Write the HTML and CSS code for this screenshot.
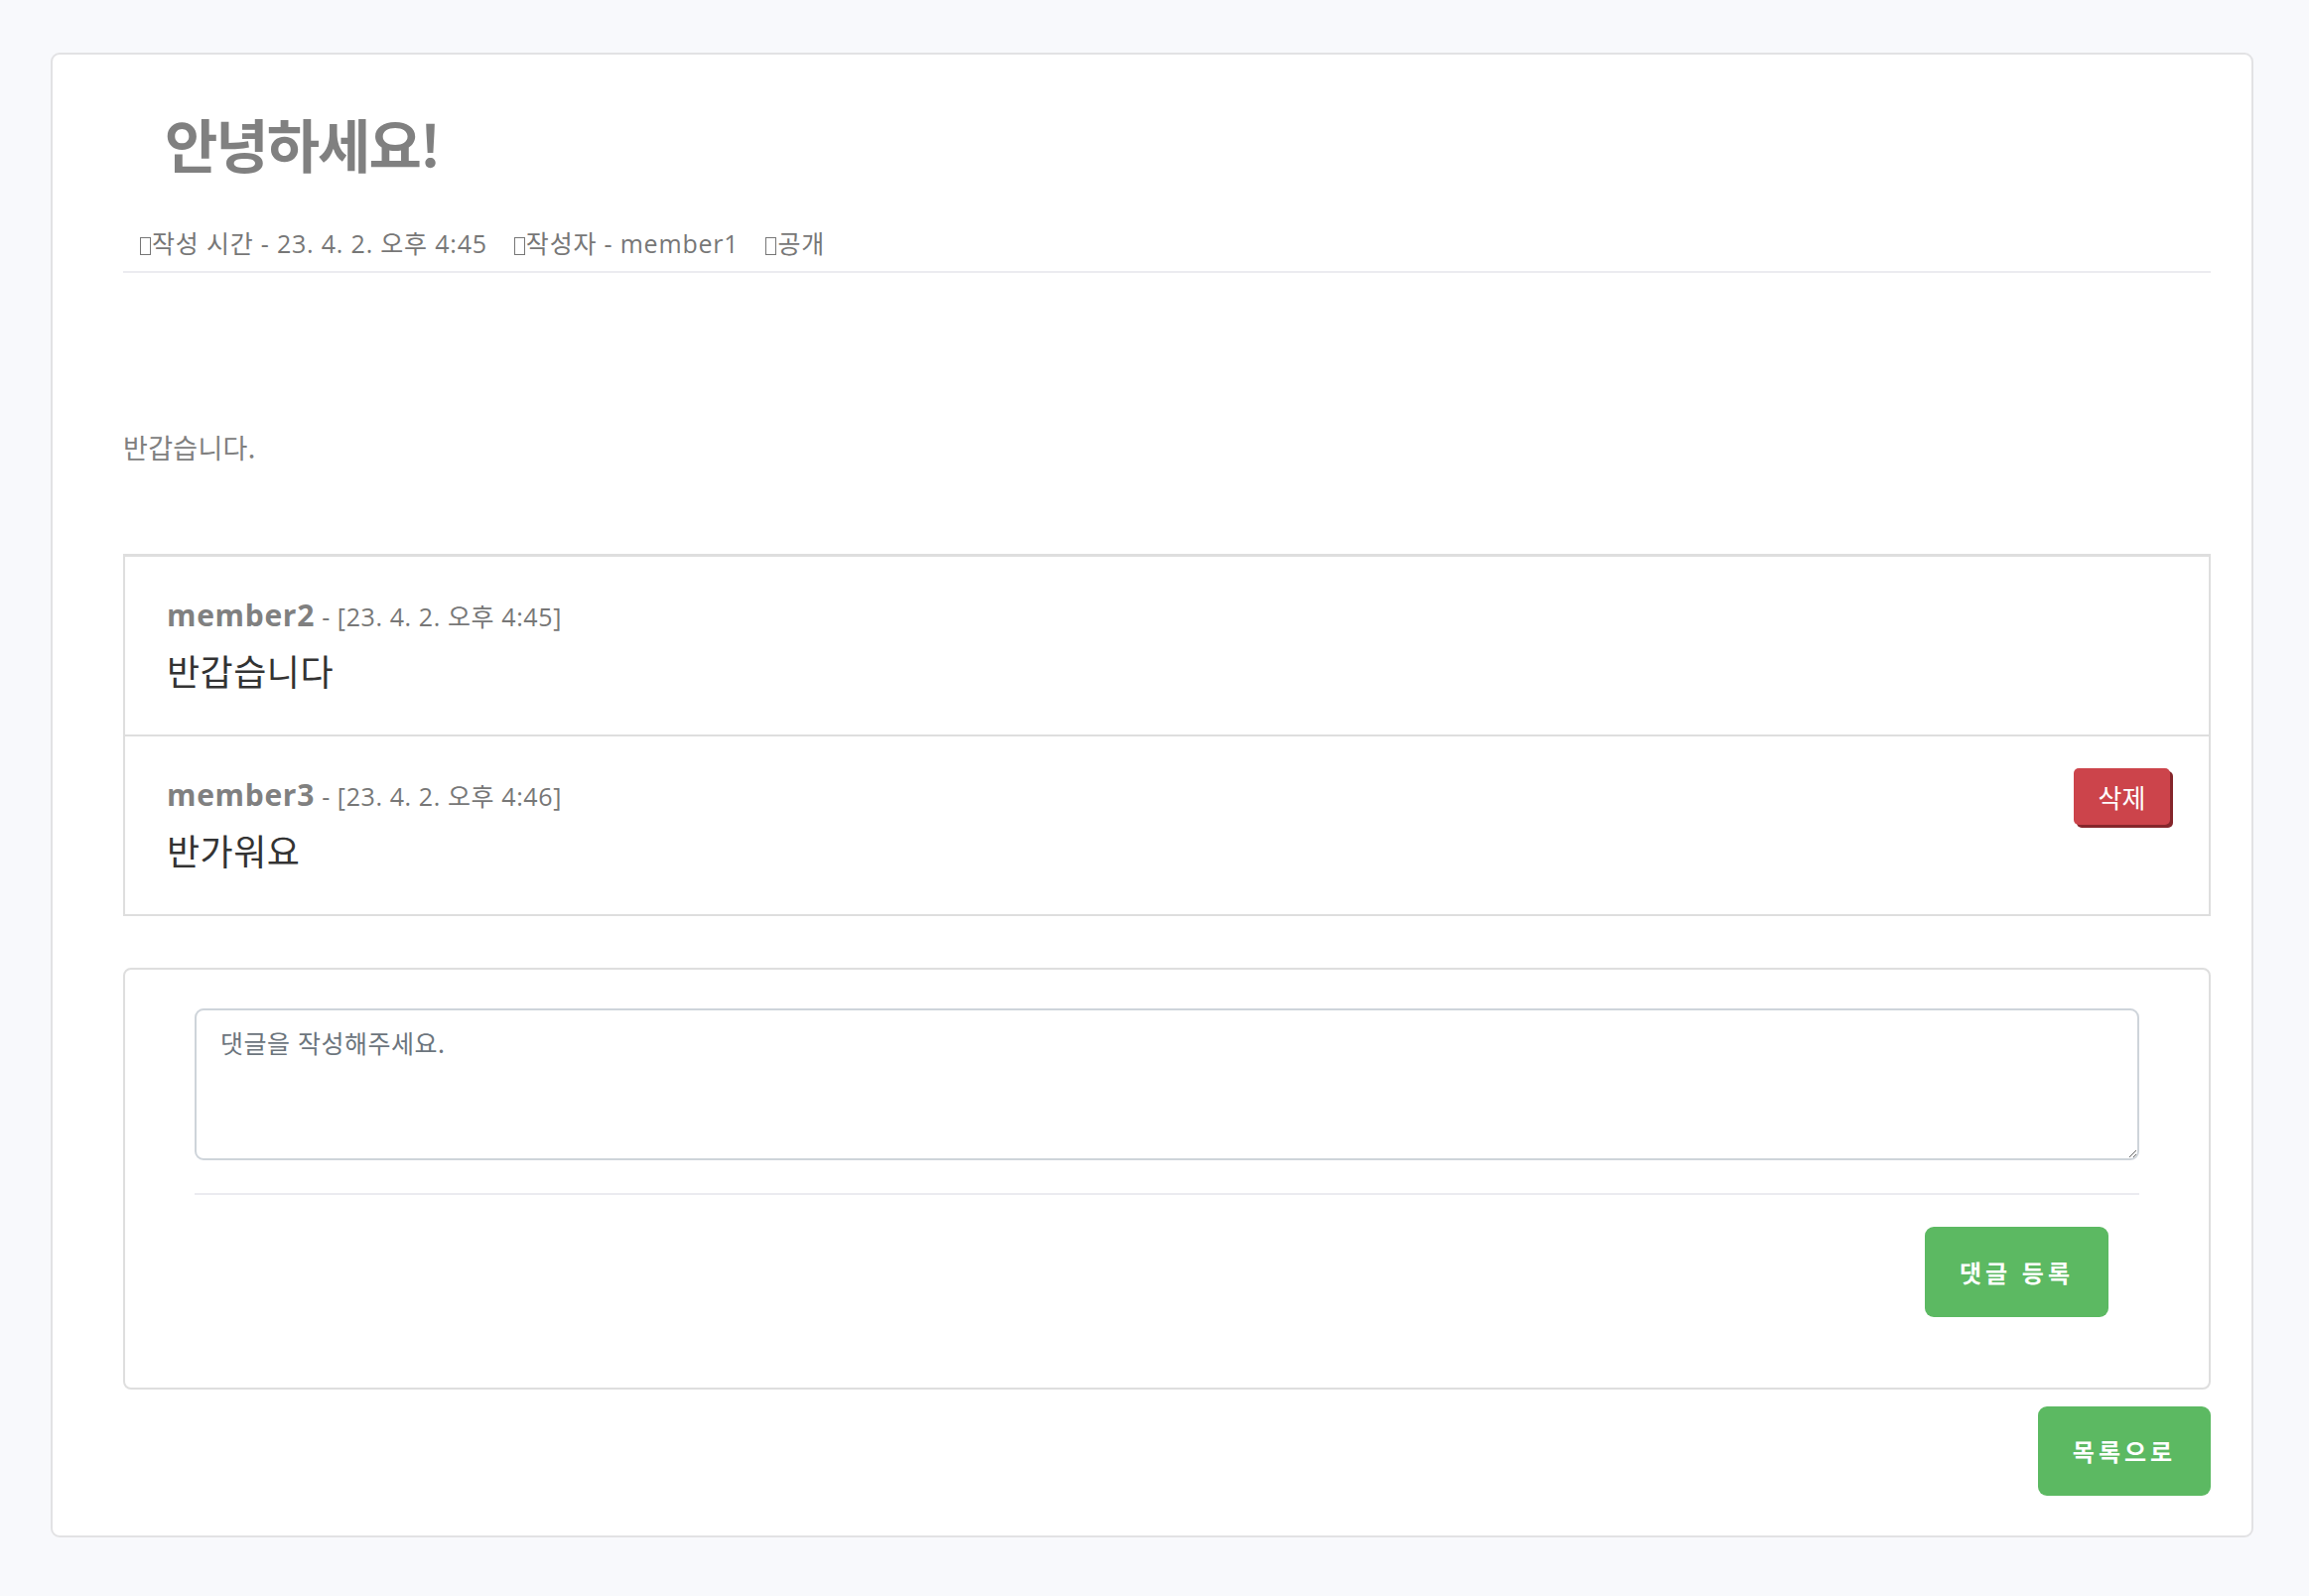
FILE: index.html
```html
<!DOCTYPE html>
<html lang="ko">
<head>
    <meta charset="UTF-8">
    <meta name="viewport" content="width=device-width, initial-scale=1.0">
    <title>게시글 상세</title>
    <link rel="stylesheet" href="styles.css">
</head>
<body>

<div class="board">
    <h1 class="title">안녕하세요!</h1>

    <div class="meta">
        <span class="meta-item"><i class="ico"></i>작성 시간 - 23. 4. 2. 오후 4:45</span>
        <span class="meta-item"><i class="ico"></i>작성자 - member1</span>
        <span class="meta-item"><i class="ico"></i>공개</span>
    </div>

    <div class="content">반갑습니다.</div>

    <ul class="comments">
        <li class="comment">
            <div>
                <p class="comment-head"><b>member2</b> - [23. 4. 2. 오후 4:45]</p>
                <p class="comment-body">반갑습니다</p>
            </div>
        </li>
        <li class="comment">
            <div>
                <p class="comment-head"><b>member3</b> - [23. 4. 2. 오후 4:46]</p>
                <p class="comment-body">반가워요</p>
            </div>
            <button class="btn-delete">삭제</button>
        </li>
    </ul>

    <form class="comment-form" onsubmit="return false;">
        <textarea placeholder="댓글을 작성해주세요."></textarea>
        <hr>
        <div class="form-actions">
            <button class="btn btn-green btn-submit">댓글 등록</button>
        </div>
    </form>

    <div class="bottom-actions">
        <a href="#" class="btn btn-green">목록으로</a>
    </div>
</div>

</body>
</html>
```

FILE: styles.css
```css
/* General Styles */
body {
    margin: 0;
    background: #f8f9fc;
    font-family: 'Open Sans', 'Noto Sans CJK KR', sans-serif;
    color: #808080;
}
.board {
    margin: 53px 56px 59px 51px;
    background: #fff;
    border: 2px solid #e2e2e4;
    border-radius: 9px;
    padding: 0 41px 40px 71px;
    box-sizing: border-box;
}
.title {
    margin: 54px 0 0 42px;
    font-family: 'Noto Sans CJK KR', sans-serif;
    font-size: 58px;
    line-height: 70px;
    font-weight: 700;
    letter-spacing: -2px;
    color: #808080;
}

/* meta line */
.meta {
    margin-top: 49px;
    padding: 0 0 11px 17px;
    border-bottom: 2px solid #ebebf0;
    display: flex;
    gap: 27px;
    font-size: 25px;
    line-height: 34px;
    color: #777;
    letter-spacing: 0.8px;
}
.ico {
    display: inline-block;
    width: 9px;
    height: 16px;
    border: 1px solid #777;
    margin-right: 1px;
    vertical-align: -2px;
}
.content {
    margin-top: 156px;
    font-family: 'Noto Sans CJK KR', sans-serif;
    font-size: 27px;
    line-height: 40px;
    letter-spacing: 0.3px;
    color: #808080;
}

/* comments */
.comments {
    list-style: none;
    margin: 87px 0 0;
    padding: 0;
    border: 2px solid #dedede;
    border-top-width: 3px;
}
.comment {
    display: flex;
    justify-content: space-between;
    align-items: flex-start;
    padding: 39px 39px 40px 42px;
}
.comment + .comment {
    border-top: 2px solid #dedede;
}
.comment p {
    margin: 0;
}
.comment-head {
    font-size: 25px;
    line-height: 40px;
    letter-spacing: 0.6px;
    color: #777;
}
.comment-head b {
    font-size: 30px;
    letter-spacing: 0.7px;
    color: #808080;
}
.comment-body {
    margin-top: 9px !important;
    font-family: 'Noto Sans CJK KR', sans-serif;
    font-size: 36px;
    line-height: 50px;
    letter-spacing: 0.5px;
    color: #333;
}
.btn-delete {
    margin-top: -7px;
    width: 97px;
    height: 57px;
    border: none;
    border-radius: 5px;
    background: #cc444b;
    box-shadow: 3px 3px 0 #85262b;
    color: #fff;
    font-family: 'Noto Sans CJK KR', sans-serif;
    font-size: 26px;
    cursor: pointer;
}

/* comment form */
.comment-form {
    margin-top: 52px;
    border: 2px solid #dedede;
    border-radius: 8px;
    padding: 39px 70px 71px;
}
.comment-form textarea {
    display: block;
    width: 100%;
    height: 153px;
    box-sizing: border-box;
    border: 2px solid #ced4da;
    border-radius: 9px;
    padding: 14px 24px;
    font-family: 'Noto Sans CJK KR', sans-serif;
    font-size: 25px;
    line-height: 36px;
    letter-spacing: 0.5px;
    color: #495057;
    resize: vertical;
}
.comment-form textarea::placeholder {
    color: #6c757d;
}
.comment-form hr {
    margin: 33px 0 32px;
    border: none;
    border-top: 2px solid #ebebf0;
}
.form-actions {
    display: flex;
    justify-content: flex-end;
    padding-right: 31px;
}
.btn {
    display: inline-block;
    border: none;
    border-radius: 9px;
    font-family: 'Noto Sans CJK KR', sans-serif;
    font-size: 24px;
    font-weight: 700;
    letter-spacing: 4px;
    text-decoration: none;
    text-align: center;
    cursor: pointer;
}
.btn-green {
    background: #5cb962;
    color: #fff;
    width: 174px;
    height: 90px;
    line-height: 90px;
    padding: 0;
}
.btn-submit {
    width: 185px;
    height: 91px;
}
.bottom-actions {
    margin-top: 17px;
    display: flex;
    justify-content: flex-end;
}
```
